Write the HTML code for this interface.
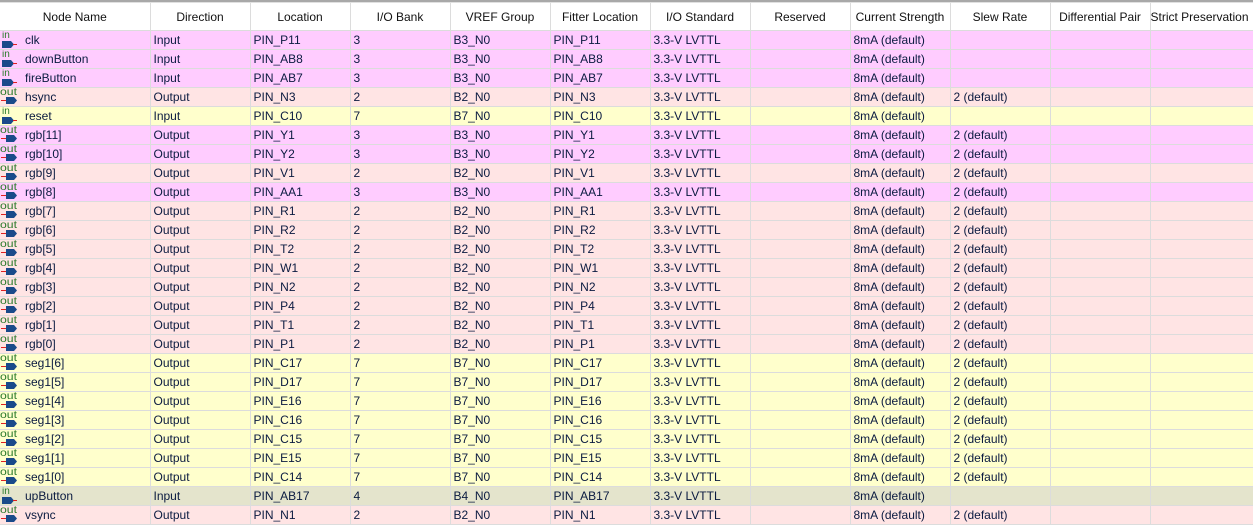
<!DOCTYPE html>
<html><head><meta charset="utf-8">
<style>
html,body{margin:0;padding:0;background:#fff;width:1253px;height:528px;overflow:hidden}
body{font-family:"Liberation Sans",sans-serif;font-size:12px;color:#0a1a40}
.top{height:2px;background:#a8a8a8;border-bottom:1px solid #e0e0e0}
table{border-collapse:collapse;table-layout:fixed;width:1253px;position:absolute;top:3px;left:0}
td,th{border-right:1px solid #dcdcdc;border-bottom:1px solid #dcdcdc;padding:0 0 0 3px;white-space:nowrap;overflow:hidden;height:18px;line-height:18px}
th{height:27px;font-weight:normal;text-align:center;background:#fff;color:#111;padding:0}
td:first-child{padding-left:0}
.n{display:inline-block;vertical-align:top;width:25px;height:18px}
.n svg{display:block}
.a td{background:#ffccff}
.b td{background:#ffe4e4}
.c td{background:#ffffcc}
.d td{background:#e4e4cc}
</style></head><body>
<svg width="0" height="0" style="position:absolute;left:0;top:0">
<defs>
<g id="in"><text x="2" y="7" font-size="10" fill="#2a7a2a" font-family="Liberation Sans">in</text><path d="M2 10h9l3 3.5-3 3.5H2z" fill="#1a4a8a"/><path d="M13 13.5h4" stroke="#e02020" stroke-width="1"/></g>
<g id="out"><text x="0" y="7" font-size="10" fill="#2a7a2a" font-family="Liberation Sans" textLength="17" lengthAdjust="spacingAndGlyphs">out</text><path d="M6 9h8l3 3.5-3 3.5H6z" fill="#1a4a8a"/><path d="M1 12.5h5" stroke="#e02020" stroke-width="1"/></g>
</defs></svg>
<div class="top"></div>
<table>
<colgroup><col style="width:150px"><col style="width:100px"><col style="width:100px"><col style="width:100px"><col style="width:100px"><col style="width:100px"><col style="width:100px"><col style="width:100px"><col style="width:100px"><col style="width:100px"><col style="width:100px"><col style="width:103px"></colgroup>
<tr><th>Node Name</th><th>Direction</th><th>Location</th><th>I/O Bank</th><th>VREF Group</th><th>Fitter Location</th><th>I/O Standard</th><th>Reserved</th><th>Current Strength</th><th>Slew Rate</th><th>Differential Pair</th><th style="text-align:left">Strict Preservation</th></tr>
<tr class="a"><td><span class="n"><svg width="25" height="18"><use href="#in"/></svg></span>clk</td><td>Input</td><td>PIN_P11</td><td>3</td><td>B3_N0</td><td>PIN_P11</td><td>3.3-V LVTTL</td><td></td><td>8mA (default)</td><td></td><td></td><td></td></tr>
<tr class="a"><td><span class="n"><svg width="25" height="18"><use href="#in"/></svg></span>downButton</td><td>Input</td><td>PIN_AB8</td><td>3</td><td>B3_N0</td><td>PIN_AB8</td><td>3.3-V LVTTL</td><td></td><td>8mA (default)</td><td></td><td></td><td></td></tr>
<tr class="a"><td><span class="n"><svg width="25" height="18"><use href="#in"/></svg></span>fireButton</td><td>Input</td><td>PIN_AB7</td><td>3</td><td>B3_N0</td><td>PIN_AB7</td><td>3.3-V LVTTL</td><td></td><td>8mA (default)</td><td></td><td></td><td></td></tr>
<tr class="b"><td><span class="n"><svg width="25" height="18"><use href="#out"/></svg></span>hsync</td><td>Output</td><td>PIN_N3</td><td>2</td><td>B2_N0</td><td>PIN_N3</td><td>3.3-V LVTTL</td><td></td><td>8mA (default)</td><td>2 (default)</td><td></td><td></td></tr>
<tr class="c"><td><span class="n"><svg width="25" height="18"><use href="#in"/></svg></span>reset</td><td>Input</td><td>PIN_C10</td><td>7</td><td>B7_N0</td><td>PIN_C10</td><td>3.3-V LVTTL</td><td></td><td>8mA (default)</td><td></td><td></td><td></td></tr>
<tr class="a"><td><span class="n"><svg width="25" height="18"><use href="#out"/></svg></span>rgb[11]</td><td>Output</td><td>PIN_Y1</td><td>3</td><td>B3_N0</td><td>PIN_Y1</td><td>3.3-V LVTTL</td><td></td><td>8mA (default)</td><td>2 (default)</td><td></td><td></td></tr>
<tr class="a"><td><span class="n"><svg width="25" height="18"><use href="#out"/></svg></span>rgb[10]</td><td>Output</td><td>PIN_Y2</td><td>3</td><td>B3_N0</td><td>PIN_Y2</td><td>3.3-V LVTTL</td><td></td><td>8mA (default)</td><td>2 (default)</td><td></td><td></td></tr>
<tr class="b"><td><span class="n"><svg width="25" height="18"><use href="#out"/></svg></span>rgb[9]</td><td>Output</td><td>PIN_V1</td><td>2</td><td>B2_N0</td><td>PIN_V1</td><td>3.3-V LVTTL</td><td></td><td>8mA (default)</td><td>2 (default)</td><td></td><td></td></tr>
<tr class="a"><td><span class="n"><svg width="25" height="18"><use href="#out"/></svg></span>rgb[8]</td><td>Output</td><td>PIN_AA1</td><td>3</td><td>B3_N0</td><td>PIN_AA1</td><td>3.3-V LVTTL</td><td></td><td>8mA (default)</td><td>2 (default)</td><td></td><td></td></tr>
<tr class="b"><td><span class="n"><svg width="25" height="18"><use href="#out"/></svg></span>rgb[7]</td><td>Output</td><td>PIN_R1</td><td>2</td><td>B2_N0</td><td>PIN_R1</td><td>3.3-V LVTTL</td><td></td><td>8mA (default)</td><td>2 (default)</td><td></td><td></td></tr>
<tr class="b"><td><span class="n"><svg width="25" height="18"><use href="#out"/></svg></span>rgb[6]</td><td>Output</td><td>PIN_R2</td><td>2</td><td>B2_N0</td><td>PIN_R2</td><td>3.3-V LVTTL</td><td></td><td>8mA (default)</td><td>2 (default)</td><td></td><td></td></tr>
<tr class="b"><td><span class="n"><svg width="25" height="18"><use href="#out"/></svg></span>rgb[5]</td><td>Output</td><td>PIN_T2</td><td>2</td><td>B2_N0</td><td>PIN_T2</td><td>3.3-V LVTTL</td><td></td><td>8mA (default)</td><td>2 (default)</td><td></td><td></td></tr>
<tr class="b"><td><span class="n"><svg width="25" height="18"><use href="#out"/></svg></span>rgb[4]</td><td>Output</td><td>PIN_W1</td><td>2</td><td>B2_N0</td><td>PIN_W1</td><td>3.3-V LVTTL</td><td></td><td>8mA (default)</td><td>2 (default)</td><td></td><td></td></tr>
<tr class="b"><td><span class="n"><svg width="25" height="18"><use href="#out"/></svg></span>rgb[3]</td><td>Output</td><td>PIN_N2</td><td>2</td><td>B2_N0</td><td>PIN_N2</td><td>3.3-V LVTTL</td><td></td><td>8mA (default)</td><td>2 (default)</td><td></td><td></td></tr>
<tr class="b"><td><span class="n"><svg width="25" height="18"><use href="#out"/></svg></span>rgb[2]</td><td>Output</td><td>PIN_P4</td><td>2</td><td>B2_N0</td><td>PIN_P4</td><td>3.3-V LVTTL</td><td></td><td>8mA (default)</td><td>2 (default)</td><td></td><td></td></tr>
<tr class="b"><td><span class="n"><svg width="25" height="18"><use href="#out"/></svg></span>rgb[1]</td><td>Output</td><td>PIN_T1</td><td>2</td><td>B2_N0</td><td>PIN_T1</td><td>3.3-V LVTTL</td><td></td><td>8mA (default)</td><td>2 (default)</td><td></td><td></td></tr>
<tr class="b"><td><span class="n"><svg width="25" height="18"><use href="#out"/></svg></span>rgb[0]</td><td>Output</td><td>PIN_P1</td><td>2</td><td>B2_N0</td><td>PIN_P1</td><td>3.3-V LVTTL</td><td></td><td>8mA (default)</td><td>2 (default)</td><td></td><td></td></tr>
<tr class="c"><td><span class="n"><svg width="25" height="18"><use href="#out"/></svg></span>seg1[6]</td><td>Output</td><td>PIN_C17</td><td>7</td><td>B7_N0</td><td>PIN_C17</td><td>3.3-V LVTTL</td><td></td><td>8mA (default)</td><td>2 (default)</td><td></td><td></td></tr>
<tr class="c"><td><span class="n"><svg width="25" height="18"><use href="#out"/></svg></span>seg1[5]</td><td>Output</td><td>PIN_D17</td><td>7</td><td>B7_N0</td><td>PIN_D17</td><td>3.3-V LVTTL</td><td></td><td>8mA (default)</td><td>2 (default)</td><td></td><td></td></tr>
<tr class="c"><td><span class="n"><svg width="25" height="18"><use href="#out"/></svg></span>seg1[4]</td><td>Output</td><td>PIN_E16</td><td>7</td><td>B7_N0</td><td>PIN_E16</td><td>3.3-V LVTTL</td><td></td><td>8mA (default)</td><td>2 (default)</td><td></td><td></td></tr>
<tr class="c"><td><span class="n"><svg width="25" height="18"><use href="#out"/></svg></span>seg1[3]</td><td>Output</td><td>PIN_C16</td><td>7</td><td>B7_N0</td><td>PIN_C16</td><td>3.3-V LVTTL</td><td></td><td>8mA (default)</td><td>2 (default)</td><td></td><td></td></tr>
<tr class="c"><td><span class="n"><svg width="25" height="18"><use href="#out"/></svg></span>seg1[2]</td><td>Output</td><td>PIN_C15</td><td>7</td><td>B7_N0</td><td>PIN_C15</td><td>3.3-V LVTTL</td><td></td><td>8mA (default)</td><td>2 (default)</td><td></td><td></td></tr>
<tr class="c"><td><span class="n"><svg width="25" height="18"><use href="#out"/></svg></span>seg1[1]</td><td>Output</td><td>PIN_E15</td><td>7</td><td>B7_N0</td><td>PIN_E15</td><td>3.3-V LVTTL</td><td></td><td>8mA (default)</td><td>2 (default)</td><td></td><td></td></tr>
<tr class="c"><td><span class="n"><svg width="25" height="18"><use href="#out"/></svg></span>seg1[0]</td><td>Output</td><td>PIN_C14</td><td>7</td><td>B7_N0</td><td>PIN_C14</td><td>3.3-V LVTTL</td><td></td><td>8mA (default)</td><td>2 (default)</td><td></td><td></td></tr>
<tr class="d"><td><span class="n"><svg width="25" height="18"><use href="#in"/></svg></span>upButton</td><td>Input</td><td>PIN_AB17</td><td>4</td><td>B4_N0</td><td>PIN_AB17</td><td>3.3-V LVTTL</td><td></td><td>8mA (default)</td><td></td><td></td><td></td></tr>
<tr class="b"><td><span class="n"><svg width="25" height="18"><use href="#out"/></svg></span>vsync</td><td>Output</td><td>PIN_N1</td><td>2</td><td>B2_N0</td><td>PIN_N1</td><td>3.3-V LVTTL</td><td></td><td>8mA (default)</td><td>2 (default)</td><td></td><td></td></tr>
</table>
</body></html>
